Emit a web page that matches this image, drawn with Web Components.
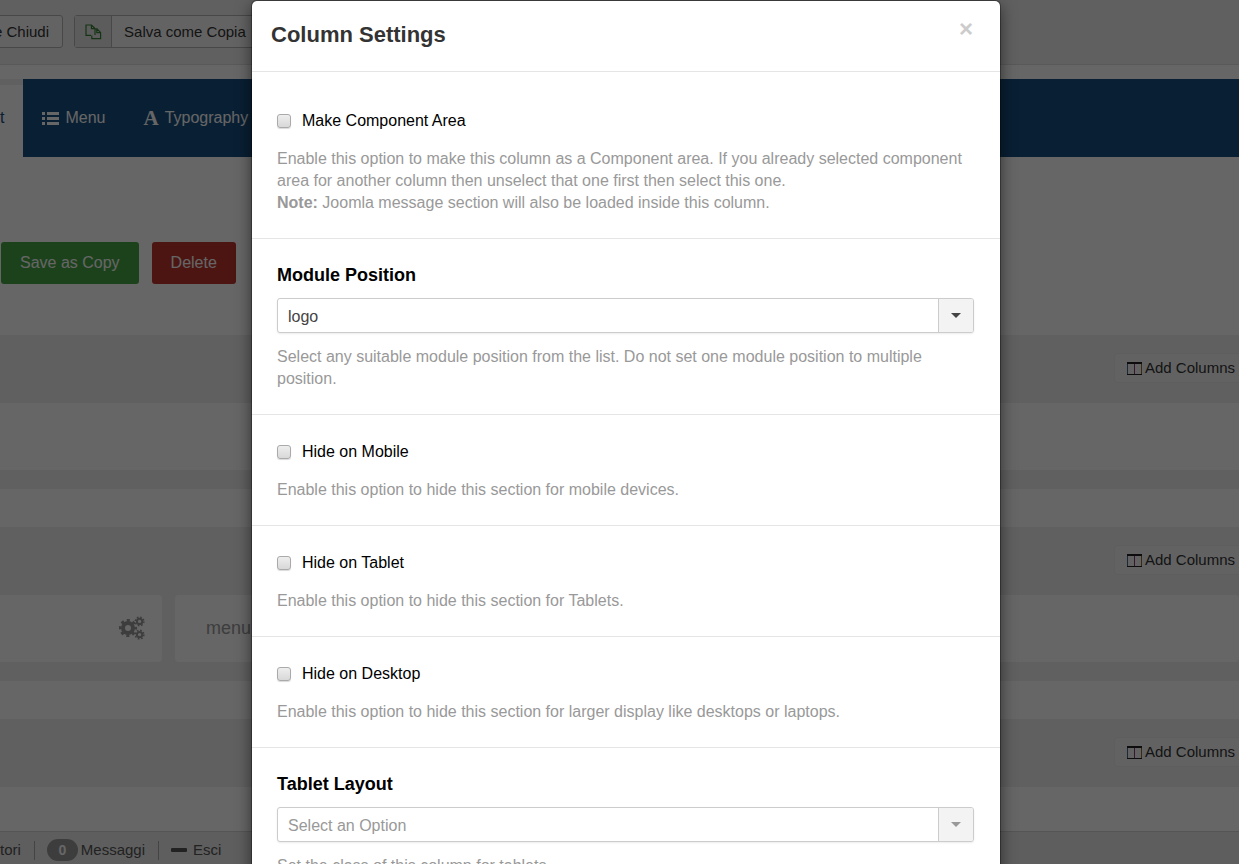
<!DOCTYPE html>
<html lang="it">
<head>
<meta charset="utf-8">
<meta name="viewport" content="width=device-width, initial-scale=1">
<title>Column Settings</title>
<style>
  html, body {
    height: 100%;
    margin: 0;
  }

  body {
    overflow: hidden;
    font: 16px/22px "Liberation Sans", Arial, sans-serif;
    color: #333;
    background: #fff;
  }
</style>
</head>
<body>
<template-admin></template-admin>

<script>
const controls = `
<style>
  *, *::before {
    box-sizing: border-box;
  }

  button, select, input {
    font: inherit;
    color: inherit;
    margin: 0;
  }

  button, select {
    cursor: pointer;
  }

  svg {
    display: block;
    flex: none;
  }
</style>
`;

class Base extends HTMLElement {
    constructor(markup) {
        super();
        this.attachShadow({ mode: "open" });
        this.shadowRoot.innerHTML = controls + markup;
    }
}

class ToolBar extends Base {
    constructor() {
        super(`
<style>
  :host {
    display: flex;
    align-items: flex-start;
    gap: 11px;
    flex: none;
    height: 65px;
    box-sizing: border-box;
    padding-top: 15px;
    font-size: 15px;
    background: #f0f0f0;
    border-bottom: 1px solid #dedede;
  }

  button {
    display: flex;
    align-items: center;
    height: 33px;
    padding: 0 13px;
    white-space: nowrap;
    background: #f8f8f8;
    border: 1px solid #b4b4b4;
    border-radius: 3px;
  }

  .save {
    margin-left: -20px;
  }

  .copy {
    padding-left: 0;
    gap: 12px;
  }

  .icon {
    display: grid;
    place-items: center;
    width: 37px;
    height: 31px;
    background: #e6e6e6;
    border-right: 1px solid #b4b4b4;
  }
</style>
<button class="save">e Chiudi</button>
<button class="copy">
  <span class="icon">
    <svg width="17" height="16" viewBox="0 0 17 16" fill="none" stroke="#378137" stroke-width="1.2">
      <path d="M6 11.4H1V1h5.5L10 4.5M6.4 1v3.6H10"/>
      <path d="M10 4.6V11M6.8 11.4v3.2H15.6V8.4L12 4.8H10M11.8 5v3.7h3.8"/>
    </svg>
  </span>
  Salva come Copia
</button>
        `);
    }
}

class TabBar extends Base {
    constructor() {
        super(`
<style>
  :host {
    display: flex;
    flex: none;
    height: 78px;
    margin-top: 14px;
    background: #184e80;
  }

  a {
    display: flex;
    align-items: center;
    gap: 6px;
    padding: 0 19px;
    color: #fff;
    text-decoration: none;
  }

  a.active {
    padding: 0 19px 6px 0;
    color: #184e80;
    background: #fff;
    border-top: 6px solid #f0f0f0;
  }

  .letter {
    font: bold 21px/22px "Liberation Serif", "Times New Roman", serif;
  }
</style>
<a class="active" href="#layout">t</a>
<a href="#menu">
  <svg width="17" height="13" fill="#fff">
    <path d="M0 0h3v3H0zM0 5h3v3H0zM0 10h3v3H0zM5 0h12v3H5zM5 5h12v3H5zM5 10h12v3H5z"/>
  </svg>
  Menu
</a>
<a href="#typography"><span class="letter" aria-hidden="true">A</span>Typography</a>
        `);
    }
}

class RowActions extends Base {
    constructor() {
        super(`
<style>
  :host {
    display: flex;
    flex: none;
    gap: 13px;
    padding: 85px 1px 51px;
  }

  button {
    height: 42px;
    padding: 0 19px;
    color: #fff;
    background: #46a546;
    border: 0;
    border-radius: 3px;
  }

  .delete {
    background: #bd362f;
  }
</style>
<button>Save as Copy</button>
<button class="delete">Delete</button>
        `);
    }
}

class LayoutSection extends Base {
    constructor() {
        super(`
<style>
  :host {
    display: block;
    flex: none;
    margin-bottom: 38px;
    padding-bottom: 19px;
    background: #f0f0f0;
  }

  header {
    display: flex;
    align-items: center;
    justify-content: flex-end;
    height: 68px;
    padding-bottom: 2px;
  }

  button {
    display: flex;
    align-items: center;
    gap: 3px;
    height: 30px;
    padding: 0 4px 0 12px;
    font-size: 15px;
    background: #f5f5f5;
    border: 1px solid #ebebeb;
    border-right: 0;
    border-radius: 4px 0 0 4px;
  }

  .columns {
    display: flex;
    gap: 13px;
    height: 67px;
  }

  slot::slotted(*), .blank {
    flex: 1;
  }

  .blank {
    background: #fff;
  }
</style>
<header>
  <button>
    <svg width="15" height="13" fill="none">
      <path d="M0 1h15" stroke="#222" stroke-width="2"/>
      <path d="M.5 2v10.5" stroke="#456a8c"/>
      <path d="M14.5 2v10.5" stroke="#8a6a40"/>
      <path d="M7.5 2v10" stroke="#804070"/>
      <path d="M0 12.5h15" stroke="#222"/>
    </svg>
    Add Columns
  </button>
</header>
<div class="columns"><slot><div class="blank"></div></slot></div>
        `);
    }
}

class LayoutColumn extends Base {
    constructor() {
        super(`
<style>
  :host {
    display: flex;
    align-items: center;
    padding: 0 17px 2px 31px;
    font-size: 18px;
    color: #999;
    background: #fff;
    border-radius: 4px;
  }

  :host([narrow]) {
    flex: 0 0 162px !important;
    border-radius: 0 4px 4px 0;
  }

  svg {
    display: none;
    margin-left: auto;
  }

  :host([narrow]) svg {
    display: block;
  }
</style>
<slot></slot>
<svg width="26" height="24" viewBox="0 0 26 24" fill="none" stroke="#999">
  <circle cx="9" cy="12" r="5" stroke-width="4"/>
  <circle cx="9" cy="12" r="7.8" stroke-width="2.6" stroke-dasharray="3.1 3.03" stroke-dashoffset="1.5"/>
  <circle cx="20.6" cy="5.4" r="2.7" stroke-width="2"/>
  <circle cx="20.6" cy="5.4" r="4.3" stroke-width="1.5" stroke-dasharray="1.7 1.68"/>
  <circle cx="20.6" cy="18.6" r="2.7" stroke-width="2"/>
  <circle cx="20.6" cy="18.6" r="4.3" stroke-width="1.5" stroke-dasharray="1.7 1.68"/>
</svg>
        `);
    }
}

class StatusBar extends Base {
    constructor() {
        super(`
<style>
  :host {
    display: flex;
    align-items: center;
    flex: none;
    height: 33px;
    box-sizing: border-box;
    padding-top: 4px;
    font-size: 15px;
    color: #555;
    background: #ebebeb;
    border-top: 1px solid #d5d5d5;
  }

  a {
    display: flex;
    align-items: center;
    color: inherit;
    text-decoration: none;
  }

  a + a {
    gap: 3px;
    margin-left: 13px;
  }

  a + a::before {
    content: "";
    width: 1px;
    height: 19px;
    margin-right: 9px;
    background: #aaa;
  }

  .badge {
    width: 31px;
    border-radius: 11px;
    font-size: 14px;
    font-weight: bold;
    text-align: center;
    color: #fff;
    background: #999;
  }

  .dash {
    width: 16px;
    height: 4px;
    margin-right: 3px;
    border-radius: 1px;
    background: #555;
  }
</style>
<a href="#users">tori</a>
<a href="#messages"><span class="badge">0</span>Messaggi</a>
<a href="#logout"><span class="dash"></span>Esci</a>
        `);
    }
}

class SettingCheck extends Base {
    constructor() {
        super(`
<style>
  :host {
    display: block;
    padding: 26px 26px 24px 25px;
    border-bottom: 1px solid #e5e5e5;
  }

  label {
    display: flex;
    align-items: center;
    gap: 11px;
    margin-bottom: 16px;
    color: #000;
  }

  input {
    -webkit-appearance: none;
    appearance: none;
    width: 14px;
    height: 14px;
    border: 1px solid #aaa;
    border-radius: 3px;
    background: linear-gradient(#eee, #d8d8d8);
    box-shadow: 0 1px 1px rgba(0, 0, 0, .15);
  }

  input:checked {
    background: #666;
  }

  .help {
    color: #999;
  }
</style>
<label><input type="checkbox"><span id="text"></span></label>
<div class="help"><slot></slot></div>
        `);
        this.shadowRoot.getElementById("text").textContent = this.getAttribute("label");
    }
}

class SettingSelect extends Base {
    constructor() {
        super(`
<style>
  :host {
    display: block;
    padding: 25px 26px 24px 25px;
    border-bottom: 1px solid #e5e5e5;
  }

  label {
    display: block;
    margin-bottom: 12px;
    font-size: 18px;
    font-weight: bold;
    color: #000;
  }

  .field {
    display: grid;
    height: 35px;
    margin-bottom: 13px;
    color: #444;
  }

  .field.empty {
    color: #999;
  }

  select, .arrow {
    grid-area: 1 / 1;
  }

  select {
    -webkit-appearance: none;
    appearance: none;
    width: 100%;
    padding: 2px 46px 0 10px;
    background: #fff;
    border: 1px solid #ccc;
    border-radius: 3px;
    box-shadow: 0 1px 2px rgba(0, 0, 0, .08);
  }

  .arrow {
    display: grid;
    place-items: center;
    justify-self: end;
    width: 35px;
    margin: 1px;
    background: #f3f3f3;
    border-left: 1px solid #ccc;
    border-radius: 0 2px 2px 0;
    pointer-events: none;
  }

  .help {
    color: #999;
  }
</style>
<label for="choice"></label>
<div class="field">
  <select id="choice"><option></option></select>
  <span class="arrow">
    <svg width="10" height="5"><path d="M0 0h10L5 5z" fill="currentColor"/></svg>
  </span>
</div>
<div class="help"><slot></slot></div>
        `);
        const root = this.shadowRoot;
        root.querySelector("label").textContent = this.getAttribute("label");
        root.querySelector("option").textContent = this.getAttribute("value") || "Select an Option";
        root.querySelector(".field").classList.toggle("empty", !this.hasAttribute("value"));
    }
}

class ModalDialog extends Base {
    constructor() {
        super(`
<style>
  :host {
    position: absolute;
    inset: 0;
    overflow: hidden;
    padding: 0 238px 0 251px;
    background: rgba(0, 0, 0, .6);
  }

  section {
    background: #fff;
    background-clip: padding-box;
    border: 1px solid rgba(0, 0, 0, .3);
    border-radius: 6px;
    box-shadow: 0 5px 15px rgba(0, 0, 0, .5);
  }

  header {
    display: flex;
    align-items: flex-start;
    justify-content: space-between;
    height: 71px;
    padding: 17px 27px 0 19px;
    border-bottom: 1px solid #e5e5e5;
  }

  h2 {
    margin: 0;
    font-size: 22px;
    line-height: 34px;
    color: #333;
  }

  button {
    padding: 0;
    font-size: 24px;
    font-weight: bold;
    line-height: 22px;
    color: #ccc;
    background: none;
    border: 0;
  }

  .body {
    padding-top: 12px;
  }
</style>
<section role="dialog" aria-labelledby="title">
  <header>
    <h2 id="title">Column Settings</h2>
    <button aria-label="Close">×</button>
  </header>
  <div class="body"><slot></slot></div>
</section>
        `);
    }
}

class TemplateAdmin extends Base {
    constructor() {
        super(`
<style>
  :host {
    display: flex;
    flex-direction: column;
    height: 100vh;
    overflow: hidden;
  }

  main {
    display: flex;
    flex-direction: column;
    flex: 1;
    min-height: 0;
    overflow: hidden;
  }
</style>
<tool-bar></tool-bar>
<main>
  <tab-bar></tab-bar>
  <row-actions></row-actions>
  <layout-section></layout-section>
  <layout-section>
    <layout-column narrow></layout-column>
    <layout-column>menu</layout-column>
  </layout-section>
  <layout-section></layout-section>
</main>
<status-bar></status-bar>
<modal-dialog>
  <setting-check label="Make Component Area">
    Enable this option to make this column as a Component area. If you already selected component area for another column then unselect that one first then select this one.<br>
    <b>Note:</b> Joomla message section will also be loaded inside this column.
  </setting-check>
  <setting-select label="Module Position" value="logo">
    Select any suitable module position from the list. Do not set one module position to multiple position.
  </setting-select>
  <setting-check label="Hide on Mobile">Enable this option to hide this section for mobile devices.</setting-check>
  <setting-check label="Hide on Tablet">Enable this option to hide this section for Tablets.</setting-check>
  <setting-check label="Hide on Desktop">Enable this option to hide this section for larger display like desktops or laptops.</setting-check>
  <setting-select label="Tablet Layout">Set the class of this column for tablets.</setting-select>
</modal-dialog>
        `);
    }
}

customElements.define("tool-bar", ToolBar);
customElements.define("tab-bar", TabBar);
customElements.define("row-actions", RowActions);
customElements.define("layout-section", LayoutSection);
customElements.define("layout-column", LayoutColumn);
customElements.define("status-bar", StatusBar);
customElements.define("setting-check", SettingCheck);
customElements.define("setting-select", SettingSelect);
customElements.define("modal-dialog", ModalDialog);
customElements.define("template-admin", TemplateAdmin);
</script>
</body>
</html>
